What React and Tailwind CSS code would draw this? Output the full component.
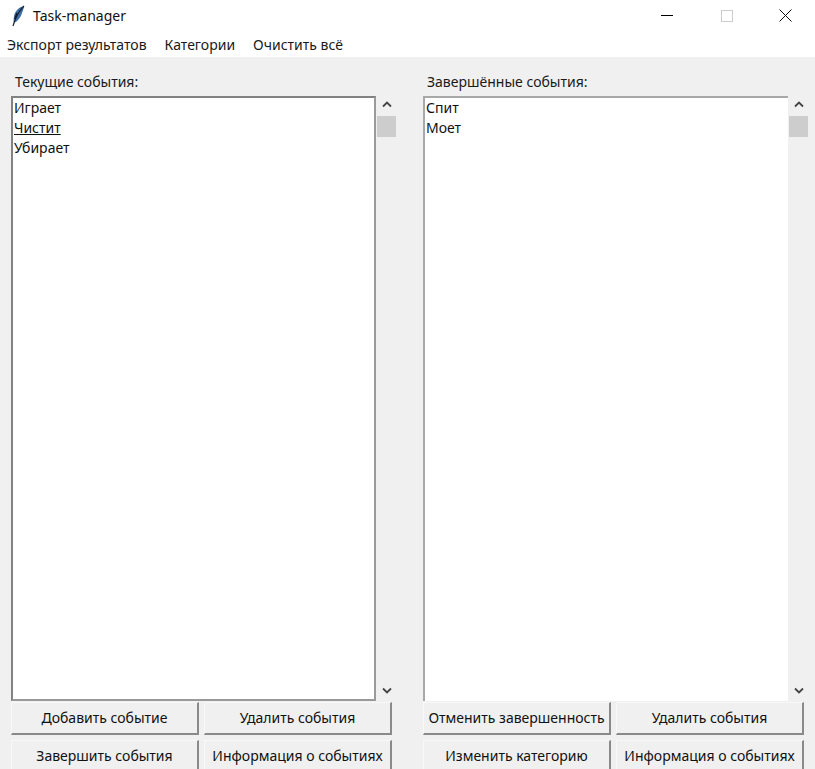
import React from 'react';

const font = { fontFamily: '"Noto Sans", sans-serif' };

const Feather = () => (
    <svg width="16" height="22" viewBox="0 0 16 22">
        <path d="M14 1 C9 2 5 6 4 11 C3.5 14 3.5 16 4 18 C8 16 11 12 12 8 C13 5 14 3 14 1 Z" fill="#3f6fa8" />
        <path d="M14 1 C10 5 7 10 5 15 L3 21" stroke="#1a2433" strokeWidth="1.2" fill="none" />
        <path d="M7 8 L5 14" stroke="#0f1a2a" strokeWidth="1.5" fill="none" />
    </svg>
);

const ArrowUp = () => (
    <svg width="10" height="7" viewBox="0 0 10 7"><path d="M1 5.5 L5 1.5 L9 5.5" stroke="#444" strokeWidth="1.8" fill="none" /></svg>
);

const ArrowDown = () => (
    <svg width="10" height="7" viewBox="0 0 10 7"><path d="M1 1.5 L5 5.5 L9 1.5" stroke="#444" strokeWidth="1.8" fill="none" /></svg>
);

const Btn = ({ children }) => (
    <button className="h-[33px] w-[188px] shrink-0 bg-[#f0f0f0] border border-[#f8f8f8] border-r-2 border-b-2 border-r-[#8a8a8a] border-b-[#8a8a8a] text-[14px] leading-none text-[#111] whitespace-nowrap flex items-center justify-center">
        {children}
    </button>
);

const Panel = ({ title, items, buttons, listClass, labelClass }) => (
    <div className="w-[381px] shrink-0 flex flex-col">
        <div className={`h-[39px] pt-[15px] text-[14px] leading-[20px] text-[#1a1a1a] ${labelClass}`}>{title}</div>
        <div className="flex h-[605px]">
            <div className={`bg-white w-[365px] shrink-0 pl-px text-[14px] leading-[20px] text-[#111] ${listClass}`}>
                {items.map((item) => (
                    <div key={item.text} className={item.active ? 'underline' : ''}>{item.text}</div>
                ))}
            </div>
            <div className="ml-px w-[19px] flex flex-col items-center">
                <div className="h-[20px] pt-[5px] flex justify-center"><ArrowUp /></div>
                <div className="h-[21px] w-[19px] bg-[#cdcdcd]" />
                <div className="flex-1" />
                <div className="h-[20px] pt-[6px] flex justify-center"><ArrowDown /></div>
            </div>
        </div>
        <div className="mt-[1px] grid grid-cols-[188px_188px] gap-x-[5px] gap-y-[5px] pl-0">
            {buttons.map((b, i) => <Btn key={i}>{b}</Btn>)}
        </div>
    </div>
);

export default function App() {
    return (
        <div className="h-[769px] w-[815px] overflow-hidden flex flex-col bg-white" style={font}>
            <div className="h-[31px] shrink-0 flex items-center">
                <div className="ml-[10px] w-[23px]"><Feather /></div>
                <span className="text-[14px] text-[#111]">Task-manager</span>
                <div className="ml-auto flex items-center">
                    <div className="w-[60px] flex justify-center"><div className="w-[12px] h-px bg-black" /></div>
                    <div className="w-[60px] flex justify-center"><div className="w-[12px] h-[12px] border border-[#ccc]" /></div>
                    <div className="w-[58px] flex justify-center pr-[1px]">
                        <svg width="13" height="13" viewBox="0 0 13 13"><path d="M0.5 0.5 L12.5 12.5 M12.5 0.5 L0.5 12.5" stroke="#111" strokeWidth="1" /></svg>
                    </div>
                </div>
            </div>
            <div className="h-[26px] shrink-0 flex items-center gap-[18px] pl-[7px] text-[14px] text-[#1a1a1a]">
                <span>Экспорт результатов</span>
                <span>Категории</span>
                <span>Очистить всё</span>
            </div>
            <div className="flex-1 bg-[#f0f0f0] flex pl-[11px] gap-[31px]">
                <Panel
                    title="Текущие события:"
                    labelClass="pl-[4px]"
                    listClass="border-2 border-[#828282] border-b-[#9a9a9a] border-r-[#9a9a9a]"
                    items={[{ text: 'Играет' }, { text: 'Чистит', active: true }, { text: 'Убирает' }]}
                    buttons={['Добавить событие', 'Удалить события', 'Завершить события', 'Информация о событиях']}
                />
                <Panel
                    title="Завершённые события:"
                    labelClass="pl-[4px]"
                    listClass="border-l-2 border-t-2 border-[#a8a8a8]"
                    items={[{ text: 'Спит' }, { text: 'Моет' }]}
                    buttons={['Отменить завершенность', 'Удалить события', 'Изменить категорию', 'Информация о событиях']}
                />
            </div>
        </div>
    );
}
